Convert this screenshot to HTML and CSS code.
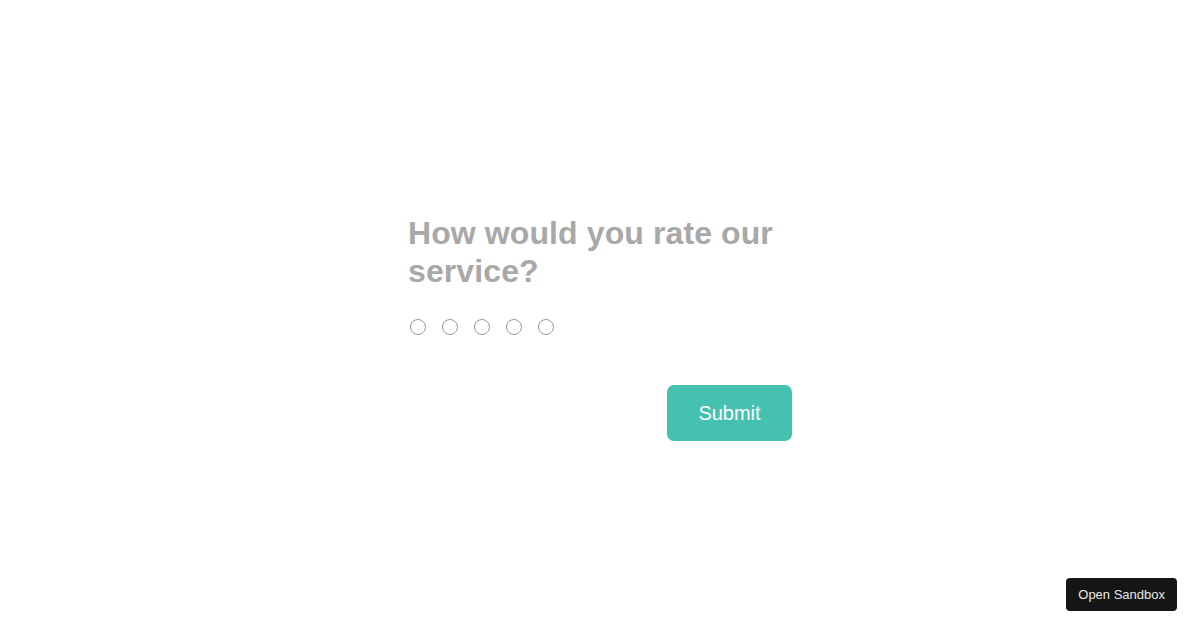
FILE: index.html
```html
<!DOCTYPE html>
<html>
<head>
    <title>Rate our service</title>
    <link rel="stylesheet" href="styles.css">
</head>
<body>
    <div class="page">
        <form class="rating-form">
            <h2 class="question">How would you rate our service?</h2>
            <div class="ratings">
                <input type="radio" name="rating" value="1" aria-label="1">
                <input type="radio" name="rating" value="2" aria-label="2">
                <input type="radio" name="rating" value="3" aria-label="3">
                <input type="radio" name="rating" value="4" aria-label="4">
                <input type="radio" name="rating" value="5" aria-label="5">
            </div>
            <div class="actions">
                <button type="button" class="submit-button">Submit</button>
            </div>
        </form>
    </div>
    <a class="sandbox-link" href="#">Open Sandbox</a>
</body>
</html>
```

FILE: styles.css
```css
body {
    margin: 0;
    font-family: "Liberation Sans", Arial, sans-serif;
    background: #fff;
}
.page {
    display: flex;
    justify-content: center;
    padding-top: 214px;
}
.rating-form {
    width: 384px;
}
.question {
    margin: 0;
    font-size: 32px;
    line-height: 38px;
    font-weight: bold;
    letter-spacing: 0.1px;
    color: #a8a8a8;
}
.ratings {
    display: flex;
    gap: 16px;
    margin-top: 29px;
    padding-left: 2px;
}
.ratings input {
    appearance: none;
    width: 16px;
    height: 16px;
    margin: 0;
    border: 1.5px solid #999;
    border-radius: 50%;
    background: #fff;
}
.ratings input:checked {
    background: radial-gradient(#45c1b0 45%, #fff 50%);
}
.actions {
    display: flex;
    justify-content: flex-end;
    margin-top: 50px;
}
.submit-button {
    width: 125px;
    height: 56px;
    border: none;
    border-radius: 7px;
    background: #45c1b0;
    color: #fff;
    font-family: "Liberation Sans", Arial, sans-serif;
    font-size: 20px;
    cursor: pointer;
}
.sandbox-link {
    position: fixed;
    right: 23px;
    bottom: 19px;
    padding: 9px 12px;
    border-radius: 4px;
    background: #151515;
    color: #e8e8e8;
    font-size: 13px;
    line-height: 15px;
    text-decoration: none;
}
```
